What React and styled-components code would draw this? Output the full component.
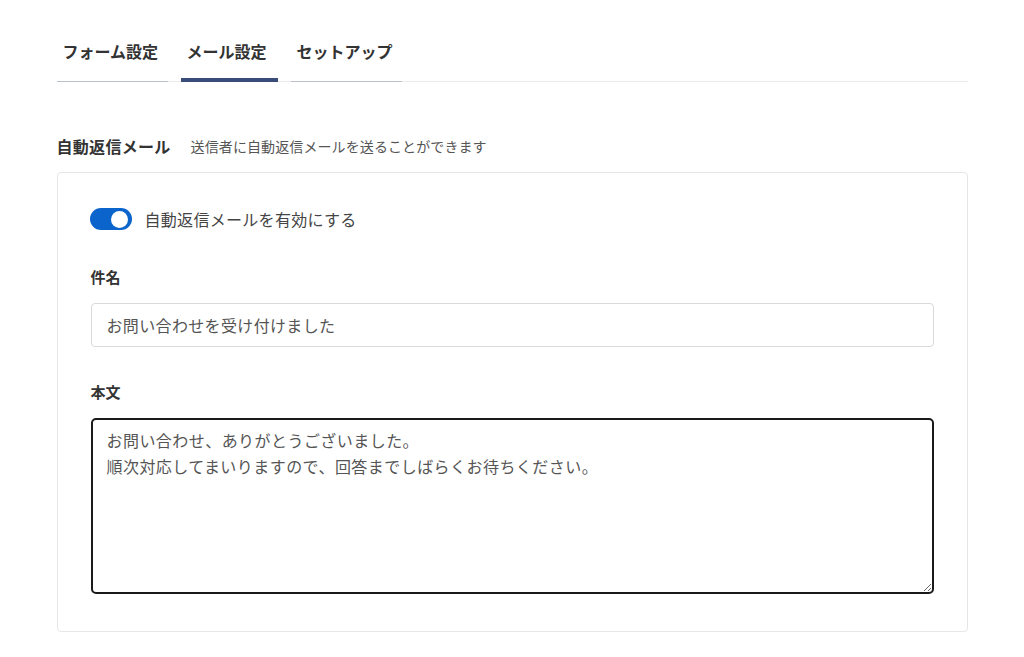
import React, { useState } from 'react';
import styled, { createGlobalStyle } from 'styled-components';

const GlobalStyle = createGlobalStyle`
  * { box-sizing: border-box; }
  body {
    margin: 0;
    background: #fff;
    font-family: "Noto Sans CJK JP", "Noto Sans", sans-serif;
    color: #333;
  }
`;

const TABS = ['フォーム設定', 'メール設定', 'セットアップ'];

export default function App() {
    const [active, setActive] = useState(1);
    const [enabled, setEnabled] = useState(true);
    const [subject, setSubject] = useState('お問い合わせを受け付けました');
    const [body, setBody] = useState(
        'お問い合わせ、ありがとうございました。\n順次対応してまいりますので、回答までしばらくお待ちください。'
    );

    return (
        <Page>
            <GlobalStyle />

            {/* TABS */}
            <TabBar>
                {TABS.map((tab, i) => (
                    <Tab key={tab} $active={i === active} onClick={() => setActive(i)}>
                        {tab}
                    </Tab>
                ))}
            </TabBar>

            {/* SECTION HEADER */}
            <SectionHeader>
                <SectionTitle>自動返信メール</SectionTitle>
                <SectionNote>送信者に自動返信メールを送ることができます</SectionNote>
            </SectionHeader>

            {/* CARD */}
            <Card>
                <ToggleRow onClick={() => setEnabled(!enabled)}>
                    <Switch $on={enabled}>
                        <Knob $on={enabled} />
                    </Switch>
                    <ToggleLabel>自動返信メールを有効にする</ToggleLabel>
                </ToggleRow>

                <Label>件名</Label>
                <Input
                    type="text"
                    value={subject}
                    onChange={(e) => setSubject(e.target.value)}
                />

                <Label $gap={34}>本文</Label>
                <TextArea value={body} onChange={(e) => setBody(e.target.value)} />
            </Card>
        </Page>
    );
}

// STYLED COMPONENTS
const Page = styled.div`
  width: 911px;
  margin: 0 auto;
  padding-bottom: 24px;
`;

const TabBar = styled.div`
  display: flex;
  gap: 13px;
  border-bottom: 1px solid #ebebeb;
`;

const Tab = styled.div`
  padding: 39px 6px 15px;
  margin-bottom: -1px;
  font-size: 16px;
  line-height: 24px;
  font-weight: 700;
  color: #333;
  cursor: pointer;
  border-bottom: ${(p) => (p.$active ? '4px solid #3a4d78' : '1px solid #bcc0c9')};
  border-radius: ${(p) => (p.$active ? '3px 3px 0 0' : '0')};
  padding-bottom: ${(p) => (p.$active ? '15px' : '18px')};
  min-width: ${(p) => (p.$active ? '97px' : '111px')};
`;

const SectionHeader = styled.div`
  display: flex;
  align-items: center;
  gap: 20px;
  margin-top: 53px;
  height: 22px;
`;

const SectionTitle = styled.h2`
  margin: 0;
  font-size: 16px;
  font-weight: 700;
  letter-spacing: 0.3px;
  color: #333;
`;

const SectionNote = styled.span`
  font-size: 14px;
  letter-spacing: 0.1px;
  color: #555;
`;

const Card = styled.div`
  margin-top: 15px;
  border: 1px solid #e6e6e6;
  border-radius: 4px;
  background: #fff;
  padding: 35px 33px 37px;
  display: flex;
  flex-direction: column;
`;

const ToggleRow = styled.div`
  display: flex;
  align-items: center;
  gap: 13px;
  height: 22px;
  margin-left: -1px;
  cursor: pointer;
`;

const Switch = styled.div`
  width: 42px;
  height: 22px;
  border-radius: 11px;
  background: ${(p) => (p.$on ? '#0a64cc' : '#c6c9cf')};
  display: flex;
  align-items: center;
  padding: 0 4px;
  justify-content: ${(p) => (p.$on ? 'flex-end' : 'flex-start')};
`;

const Knob = styled.div`
  width: 17px;
  height: 17px;
  border-radius: 50%;
  background: #fff;
`;

const ToggleLabel = styled.span`
  font-size: 16px;
  letter-spacing: 0.3px;
  color: #444;
`;

const Label = styled.div`
  margin-top: ${(p) => p.$gap || 36}px;
  margin-bottom: 15px;
  font-size: 15px;
  line-height: 22px;
  font-weight: 700;
  color: #333;
`;

const Input = styled.input`
  height: 44px;
  width: 100%;
  border: 1px solid #d9d9d9;
  border-radius: 4px;
  padding: 0 15px;
  font-family: inherit;
  font-size: 16px;
  letter-spacing: 0.35px;
  color: #555;
  background: #fff;
  outline: none;
`;

const TextArea = styled.textarea`
  height: 176px;
  width: 100%;
  border: 2px solid #1a1a1a;
  border-radius: 5px;
  padding: 7px 14px;
  font-family: inherit;
  font-size: 16px;
  line-height: 26px;
  letter-spacing: 0.45px;
  color: #555;
  background: #fff;
  outline: none;
  resize: vertical;
`;
